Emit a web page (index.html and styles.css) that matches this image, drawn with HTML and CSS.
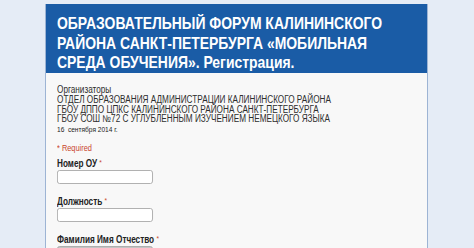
FILE: index.html
```html
<!DOCTYPE html>
<html lang="ru">
<head>
<meta charset="utf-8">
<title>Регистрация</title>
<link rel="stylesheet" href="styles.css">
</head>
<body>
<div class="form">
  <header class="form-header">
    <h1 class="form-title">ОБРАЗОВАТЕЛЬНЫЙ ФОРУМ КАЛИНИНСКОГО РАЙОНА САНКТ-ПЕТЕРБУРГА «МОБИЛЬНАЯ СРЕДА ОБУЧЕНИЯ». Регистрация.</h1>
  </header>
  <div class="form-body">
    <div class="narrow">
      <div class="desc">
        <div>Организаторы</div>
        <div>ОТДЕЛ ОБРАЗОВАНИЯ АДМИНИСТРАЦИИ КАЛИНИНСКОГО РАЙОНА</div>
        <div>ГБОУ ДППО ЦПКС КАЛИНИНСКОГО РАЙОНА САНКТ-ПЕТЕРБУРГА</div>
        <div>ГБОУ СОШ №72 С УГЛУБЛЕННЫМ ИЗУЧЕНИЕМ НЕМЕЦКОГО ЯЗЫКА</div>
        <div class="date">16&nbsp; сентября 2014 г.</div>
      </div>
      <div class="required">* Required</div>
      <div class="field">
        <label class="label">Номер ОУ <span class="star">*</span></label>
        <input class="input" type="text">
      </div>
      <div class="field">
        <label class="label">Должность <span class="star">*</span></label>
        <input class="input" type="text">
      </div>
      <div class="field">
        <label class="label">Фамилия Имя Отчество <span class="star">*</span></label>
        <input class="input input-dim" type="text">
      </div>
    </div>
  </div>
</div>
</body>
</html>
```

FILE: styles.css
```css
html, body {
  margin: 0;
  padding: 0;
  background: #e5ecf6;
  height: 100%;
  overflow: hidden;
}
body {
  font-family: "Liberation Sans", Arial, sans-serif;
}
.form {
  margin: 4px 0 0 45px;
  width: 381px;
  border-left: 1px solid #9db4d4;
  border-right: 1px solid #9db4d4;
  background: #f8f8f8;
  min-height: 300px;
}
.form-header {
  background: #1a5ca6;
  padding: 10px 10px 0 11px;
  height: 59px;
}
.form-title {
  margin: 0;
  width: 439px;
  color: #fff;
  font-size: 17px;
  line-height: 19.5px;
  font-weight: bold;
  transform: scaleX(0.82);
  transform-origin: 0 0;
}
.form-body {
  padding: 12px 0 0 11px;
}
.narrow {
  width: 440px;
  transform: scaleX(0.82);
  transform-origin: 0 0;
}
.desc {
  font-size: 10px;
  line-height: 9.8px;
  color: #2e2e2e;
}
.date {
  font-size: 8px;
  margin-top: 1px;
  color: #222;
}
.required {
  margin-top: 8px;
  font-size: 9px;
  color: #c9452c;
  line-height: 10px;
}
.field {
  display: flex;
  flex-direction: column;
  align-items: flex-start;
  margin-top: 6px;
}
.field + .field {
  margin-top: 13px;
}
.label {
  display: block;
  height: 10px;
  font-size: 10px;
  font-weight: bold;
  color: #222;
  line-height: 10px;
  margin-bottom: 1px;
}
.star {
  color: #c9452c;
  font-weight: normal;
  font-size: 8px;
  line-height: 8px;
  vertical-align: top;
}
.input {
  box-sizing: border-box;
  width: 117px;
  height: 14px;
  margin: 0;
  border: 1px solid #a9a9a9;
  border-radius: 3px;
  background: #fff;
  padding: 0;
}
.input-dim {
  background: #c4c4c4;
}
```
